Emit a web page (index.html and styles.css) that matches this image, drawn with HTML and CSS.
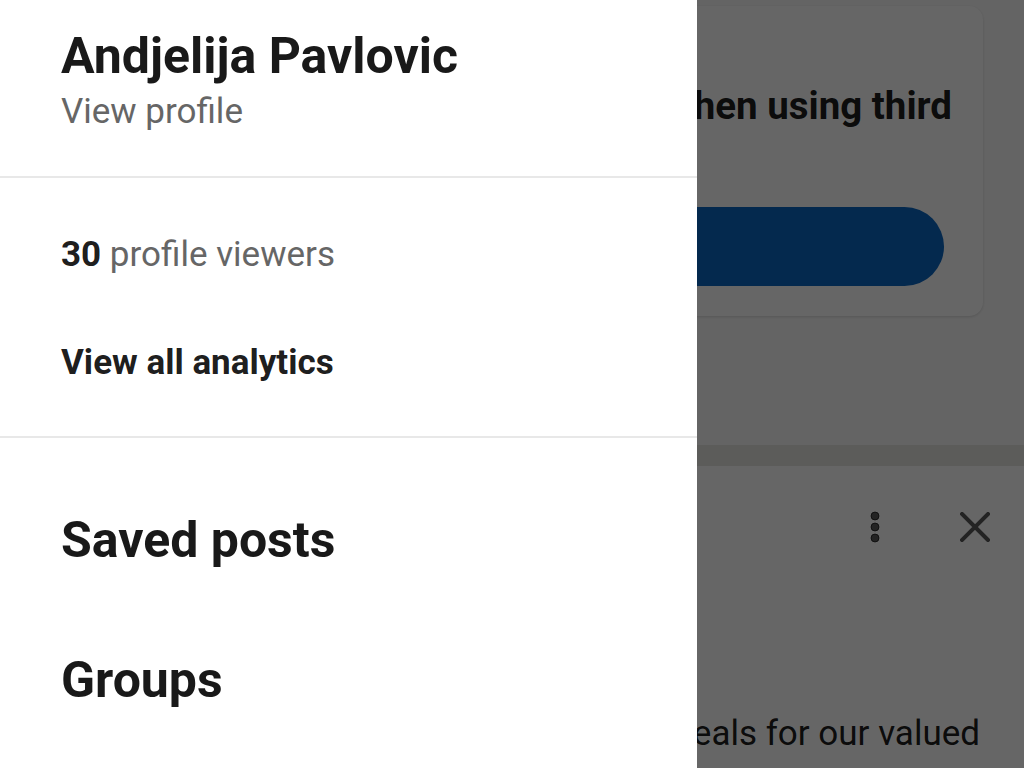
FILE: index.html
```html
<!DOCTYPE html>
<html lang="en">
<head>
  <meta charset="UTF-8">
  <title>Menu</title>
  <meta name="viewport" content="width=device-width, initial-scale=1.0">
  <link rel="stylesheet" href="styles.css">
</head>
<body>

<div class="feed">
  <div class="card">
    <p class="card-text">Stay safe when using third</p>
    <div class="card-actions">
      <button class="primary-btn"></button>
    </div>
  </div>

  <div class="band"></div>

  <div class="panel">
    <div class="panel-head">
      <span class="icon-btn">
        <svg width="10" height="32" viewBox="0 0 10 32">
          <circle cx="5" cy="5" r="4"/>
          <circle cx="5" cy="16" r="4"/>
          <circle cx="5" cy="27" r="4"/>
        </svg>
      </span>
      <span class="icon-btn">
        <svg width="30" height="30" viewBox="0 0 30 30">
          <path d="M2 2 L28 28 M28 2 L2 28" stroke-width="4" stroke-linecap="square"/>
        </svg>
      </span>
    </div>
    <p class="panel-text">Exclusive deals for our valued</p>
  </div>
</div>

<div class="scrim"></div>

<nav class="drawer">
  <div class="drawer-section profile">
    <div class="name">Andjelija Pavlovic</div>
    <div class="view-profile">View profile</div>
  </div>

  <div class="drawer-section stats">
    <div class="stat"><strong>30</strong> profile viewers</div>
    <div class="analytics">View all analytics</div>
  </div>

  <div class="menu">
    <div class="menu-item">Saved posts</div>
    <div class="menu-item">Groups</div>
  </div>
</nav>

</body>
</html>
```

FILE: styles.css
```css
body {
  font-family: Roboto, 'Noto Sans', sans-serif;
  margin: 0;
  width: 1024px;
  height: 768px;
  overflow: hidden;
  position: relative;
  background: #fff;
  color: rgba(0, 0, 0, 0.9);
}

/* contenu derriere le menu */
.feed {
  height: 768px;
  padding-top: 6px;
  box-sizing: border-box;
  background: #fbfbfb;
}

.card {
  margin: 0 41px 0 40px;
  height: 310px;
  background: #fff;
  border-radius: 14px;
  box-shadow: 0 1px 3px rgba(0, 0, 0, 0.15);
  box-sizing: border-box;
  padding-top: 78px;
}

.card-text {
  margin: 0;
  text-align: right;
  padding-right: 31px;
  font-size: 38.5px;
  font-weight: 700;
  line-height: 44px;
  white-space: nowrap;
}

.card-actions {
  display: flex;
  justify-content: flex-end;
  padding-right: 39px;
  margin-top: 79px;
}

.primary-btn {
  width: 700px;
  height: 79px;
  border: none;
  border-radius: 40px;
  background: #0a66c2;
}

.band {
  margin-top: 129px;
  height: 21px;
  background: #e7e5e0;
}

.panel {
  background: #fff;
  height: 302px;
}

.panel-head {
  display: flex;
  justify-content: flex-end;
  align-items: center;
  gap: 80px;
  padding: 45px 34px 0 0;
  height: 32px;
}

.icon-btn {
  display: flex;
  align-items: center;
}

.icon-btn svg {
  fill: rgba(0, 0, 0, 0.65);
  stroke: rgba(0, 0, 0, 0.65);
}

.panel-text {
  margin: 0;
  margin-top: 171px;
  text-align: right;
  padding-right: 44px;
  font-size: 35px;
  line-height: 40px;
  white-space: nowrap;
}

.scrim {
  position: absolute;
  inset: 0;
  background: rgba(0, 0, 0, 0.6);
}

/* menu lateral */
.drawer {
  position: absolute;
  top: 0;
  left: 0;
  width: 697px;
  height: 768px;
  background: #fff;
}

.drawer-section {
  padding-left: 61px;
  border-bottom: 2px solid #e8e8e8;
}

.profile {
  padding-top: 26px;
  padding-bottom: 44px;
}

.name {
  font-size: 50px;
  font-weight: 700;
  line-height: 60px;
  color: rgba(0, 0, 0, 0.9);
}

.view-profile {
  margin-top: 6px;
  font-size: 35px;
  line-height: 40px;
  color: #666;
}

.stats {
  padding-top: 56px;
  padding-bottom: 52px;
}

.stat {
  font-size: 35px;
  line-height: 42px;
  color: #666;
}

.stat strong {
  color: rgba(0, 0, 0, 0.9);
}

.analytics {
  margin-top: 66px;
  font-size: 35px;
  font-weight: 700;
  line-height: 42px;
}

.menu {
  padding-top: 32px;
  padding-left: 61px;
}

.menu-item {
  font-size: 50px;
  font-weight: 700;
  line-height: 58px;
  padding: 41px 0;
}
```
